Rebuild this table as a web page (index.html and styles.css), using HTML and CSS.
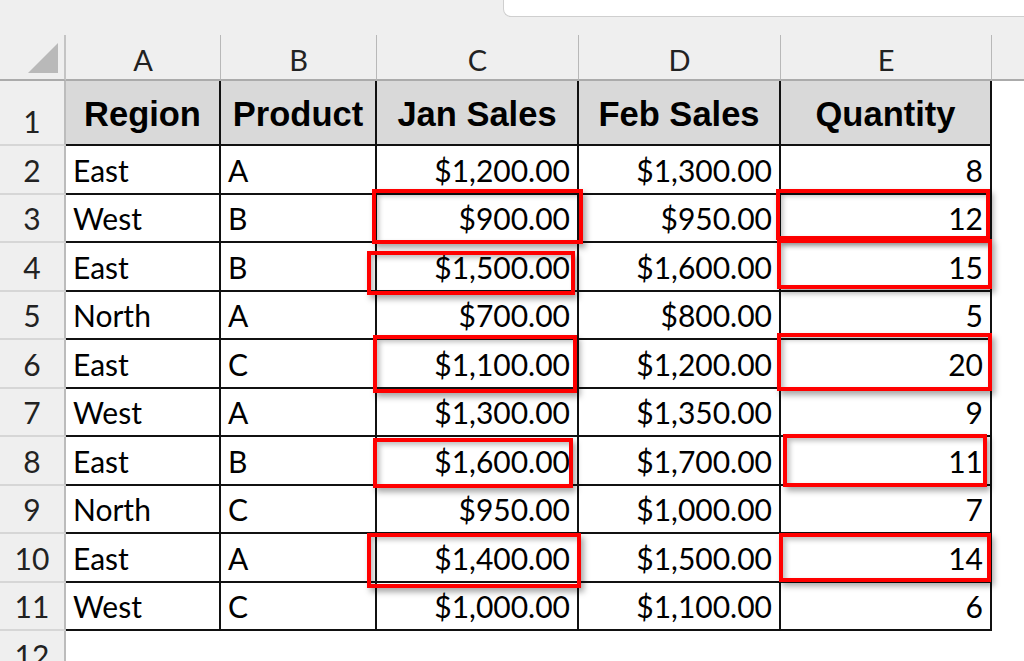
FILE: index.html
```html
<!DOCTYPE html>
<html>
<head>
<meta charset="utf-8">
<link rel="stylesheet" href="styles.css">
</head>
<body>
<div class="app">
  <div class="topbar"><div class="formula"></div></div>
  <div class="sheet">
    <div class="corner"><svg width="30" height="30" viewBox="0 0 30 30"><polygon points="30,0 30,30 0,30" fill="#b9b9b9"/></svg></div>
    <div class="ch">A</div><div class="ch">B</div><div class="ch">C</div><div class="ch">D</div><div class="ch">E</div><div class="ch rest"></div>

    <div class="rh">1</div><div class="c hd">Region</div><div class="c hd">Product</div><div class="c hd">Jan Sales</div><div class="c hd">Feb Sales</div><div class="c hd">Quantity</div><div class="fill"></div>
    <div class="rh">2</div><div class="c">East</div><div class="c">A</div><div class="c num">$1,200.00</div><div class="c num">$1,300.00</div><div class="c num">8</div><div class="fill"></div>
    <div class="rh">3</div><div class="c">West</div><div class="c">B</div><div class="c num">$900.00</div><div class="c num">$950.00</div><div class="c num">12</div><div class="fill"></div>
    <div class="rh">4</div><div class="c">East</div><div class="c">B</div><div class="c num">$1,500.00</div><div class="c num">$1,600.00</div><div class="c num">15</div><div class="fill"></div>
    <div class="rh">5</div><div class="c">North</div><div class="c">A</div><div class="c num">$700.00</div><div class="c num">$800.00</div><div class="c num">5</div><div class="fill"></div>
    <div class="rh">6</div><div class="c">East</div><div class="c">C</div><div class="c num">$1,100.00</div><div class="c num">$1,200.00</div><div class="c num">20</div><div class="fill"></div>
    <div class="rh">7</div><div class="c">West</div><div class="c">A</div><div class="c num">$1,300.00</div><div class="c num">$1,350.00</div><div class="c num">9</div><div class="fill"></div>
    <div class="rh">8</div><div class="c">East</div><div class="c">B</div><div class="c num">$1,600.00</div><div class="c num">$1,700.00</div><div class="c num">11</div><div class="fill"></div>
    <div class="rh">9</div><div class="c">North</div><div class="c">C</div><div class="c num">$950.00</div><div class="c num">$1,000.00</div><div class="c num">7</div><div class="fill"></div>
    <div class="rh">10</div><div class="c">East</div><div class="c">A</div><div class="c num">$1,400.00</div><div class="c num">$1,500.00</div><div class="c num">14</div><div class="fill"></div>
    <div class="rh">11</div><div class="c">West</div><div class="c">C</div><div class="c num">$1,000.00</div><div class="c num">$1,100.00</div><div class="c num">6</div><div class="fill"></div>
    <div class="rh">12</div><div class="fill wide"></div>
  </div>

  <div class="mark mk-c3"></div>
  <div class="mark mk-c4"></div>
  <div class="mark mk-c6"></div>
  <div class="mark mk-c8"></div>
  <div class="mark mk-c10"></div>
  <div class="mark mk-e3"></div>
  <div class="mark mk-e4"></div>
  <div class="mark mk-e6"></div>
  <div class="mark mk-e8"></div>
  <div class="mark mk-e10"></div>
</div>
</body>
</html>
```
FILE: styles.css
```css
* { box-sizing: border-box; }
html, body { margin: 0; padding: 0; }
body { width: 1024px; height: 661px; overflow: hidden; background: #ffffff; font-family: Lato, "Liberation Sans", sans-serif; }

.app { position: relative; width: 1024px; height: 661px; overflow: hidden; }

.topbar { height: 35px; background: #efefef; display: flex; }
.formula {
  margin-left: 503px;
  margin-top: -10px;
  height: 27px;
  flex: 1;
  background: #ffffff;
  border: 1px solid #cfcfcf;
  border-right: none;
  border-radius: 0 0 0 8px;
}

.sheet {
  display: grid;
  grid-template-columns: 66px 155px 156px 202px 202px 211px 1fr;
  grid-template-rows: 46px 65px repeat(11, 48.5px);
}

.corner {
  background: #efefef;
  border-right: 2px solid #c4c4c4;
  border-bottom: 2px solid #ababab;
  display: flex;
  align-items: flex-end;
  justify-content: flex-end;
  padding: 0 6px 6px 0;
}

.ch {
  background: #efefef;
  border-right: 1px solid #b8b8b8;
  border-bottom: 2px solid #ababab;
  display: flex;
  align-items: flex-end;
  justify-content: center;
  padding-bottom: 5px;
  font-size: 29px;
  line-height: 1;
  color: #222222;
}
.ch.rest { border-right: none; }

.rh {
  background: #efefef;
  border-right: 2px solid #bcbcbc;
  border-bottom: 2px solid #d6d6d6;
  display: flex;
  align-items: flex-end;
  justify-content: center;
  padding-bottom: 8px;
  font-size: 30px;
  line-height: 1;
  color: #222222;
}

.c {
  border-right: 2px solid #111111;
  border-bottom: 2px solid #111111;
  display: flex;
  align-items: flex-end;
  padding: 0 7px 8px 7px;
  font-size: 30px;
  line-height: 1;
  color: #000000;
  white-space: nowrap;
}
.c.num { justify-content: flex-end; }
.c.hd {
  background: #d9d9d9;
  font-family: "Liberation Sans", Arial, sans-serif;
  font-weight: bold;
  font-size: 34.5px;
  justify-content: center;
  align-items: center;
  padding: 4px 0 0 0;
}

.fill { background: #ffffff; }
.fill.wide { grid-column: 2 / -1; }

.mark {
  position: absolute;
  border: 4px solid #ff0000;
  box-shadow: 3px 4px 6px rgba(0, 0, 0, 0.35), inset 3px 3px 5px rgba(0, 0, 0, 0.25);
}
.mk-c3  { left: 372px; top: 189px; width: 211px; height: 55px; }
.mk-c4  { left: 367px; top: 251px; width: 208px; height: 44px; }
.mk-c6  { left: 373px; top: 335px; width: 204px; height: 58px; }
.mk-c8  { left: 373px; top: 438px; width: 200px; height: 50px; }
.mk-c10 { left: 367px; top: 533px; width: 214px; height: 55px; }
.mk-e3  { left: 776px; top: 189px; width: 214px; height: 51px; }
.mk-e4  { left: 777px; top: 239px; width: 215px; height: 50px; }
.mk-e6  { left: 777px; top: 333px; width: 215px; height: 58px; }
.mk-e8  { left: 783px; top: 434px; width: 204px; height: 53px; }
.mk-e10 { left: 779px; top: 533px; width: 212px; height: 49px; }
```
